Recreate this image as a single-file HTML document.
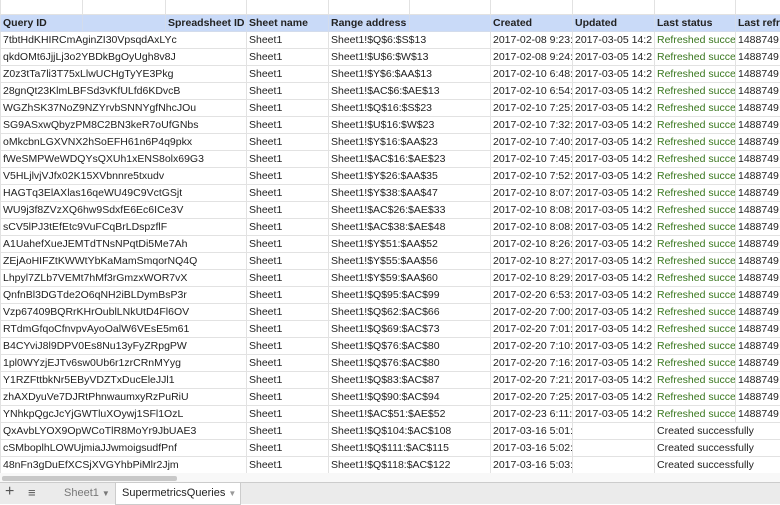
<!DOCTYPE html><html><head><style>
body{margin:0;width:780px;height:504px;overflow:hidden;background:#fff;font-family:"Liberation Sans",Arial,sans-serif;font-size:10.5px;color:#222;position:relative}
table{border-collapse:collapse;table-layout:fixed;position:absolute;top:-1px;left:0;width:816px}
td{border:1px solid #e2e2e2;height:16px;padding:0 2px;white-space:nowrap;overflow:hidden;line-height:16px}
tr.h td{background:#c9daf8;font-weight:bold;border-color:#d3dcec}
tr.t td{height:14px}
.g{color:#38761d}
.r{text-align:right}
#sb{position:absolute;top:473px;left:0;width:780px;height:9px;background:#f8f8f8;border-bottom:1px solid #ccc}
#th{position:absolute;top:476px;left:2px;width:175px;height:5px;background:#c8c8c8;border-radius:2px}
#tabs{position:absolute;top:483px;left:0;width:780px;height:21px;background:#ebebeb;color:#555;font-size:11px}
#tabs span{position:absolute;top:4px}
#act{position:absolute;left:115px;top:0;width:124px;height:21px;background:#fff;border:1px solid #ccc;border-top:none}
</style></head><body>
<table>
<colgroup><col style="width:82px"><col style="width:83px"><col style="width:81px"><col style="width:82px"><col style="width:81px"><col style="width:81px"><col style="width:82px"><col style="width:82px"><col style="width:81px"><col style="width:81px"></colgroup>
<tr class="t"><td></td><td></td><td></td><td></td><td></td><td></td><td></td><td></td><td></td><td></td></tr>
<tr class="h"><td>Query ID</td><td></td><td class="r">Spreadsheet ID</td><td>Sheet name</td><td>Range address</td><td></td><td>Created</td><td>Updated</td><td>Last status</td><td>Last refr</td></tr>
<tr><td colspan=3>7tbtHdKHIRCmAginZI30VpsqdAxLYc</td><td>Sheet1</td><td colspan=2>Sheet1!$Q$6:$S$13</td><td>2017-02-08 9:23:</td><td>2017-03-05 14:2</td><td class="g">Refreshed succe</td><td>1488749</td></tr>
<tr><td colspan=3>qkdOMt6JjjLj3o2YBDkBgOyUgh8v8J</td><td>Sheet1</td><td colspan=2>Sheet1!$U$6:$W$13</td><td>2017-02-08 9:24:</td><td>2017-03-05 14:2</td><td class="g">Refreshed succe</td><td>1488749</td></tr>
<tr><td colspan=3>Z0z3tTa7li3T75xLlwUCHgTyYE3Pkg</td><td>Sheet1</td><td colspan=2>Sheet1!$Y$6:$AA$13</td><td>2017-02-10 6:48:</td><td>2017-03-05 14:2</td><td class="g">Refreshed succe</td><td>1488749</td></tr>
<tr><td colspan=3>28gnQt23KlmLBFSd3vKfULfd6KDvcB</td><td>Sheet1</td><td colspan=2>Sheet1!$AC$6:$AE$13</td><td>2017-02-10 6:54:</td><td>2017-03-05 14:2</td><td class="g">Refreshed succe</td><td>1488749</td></tr>
<tr><td colspan=3>WGZhSK37NoZ9NZYrvbSNNYgfNhcJOu</td><td>Sheet1</td><td colspan=2>Sheet1!$Q$16:$S$23</td><td>2017-02-10 7:25:</td><td>2017-03-05 14:2</td><td class="g">Refreshed succe</td><td>1488749</td></tr>
<tr><td colspan=3>SG9ASxwQbyzPM8C2BN3keR7oUfGNbs</td><td>Sheet1</td><td colspan=2>Sheet1!$U$16:$W$23</td><td>2017-02-10 7:32:</td><td>2017-03-05 14:2</td><td class="g">Refreshed succe</td><td>1488749</td></tr>
<tr><td colspan=3>oMkcbnLGXVNX2hSoEFH61n6P4q9pkx</td><td>Sheet1</td><td colspan=2>Sheet1!$Y$16:$AA$23</td><td>2017-02-10 7:40:</td><td>2017-03-05 14:2</td><td class="g">Refreshed succe</td><td>1488749</td></tr>
<tr><td colspan=3>fWeSMPWeWDQYsQXUh1xENS8olx69G3</td><td>Sheet1</td><td colspan=2>Sheet1!$AC$16:$AE$23</td><td>2017-02-10 7:45:</td><td>2017-03-05 14:2</td><td class="g">Refreshed succe</td><td>1488749</td></tr>
<tr><td colspan=3>V5HLjlvjVJfx02K15XVbnnre5txudv</td><td>Sheet1</td><td colspan=2>Sheet1!$Y$26:$AA$35</td><td>2017-02-10 7:52:</td><td>2017-03-05 14:2</td><td class="g">Refreshed succe</td><td>1488749</td></tr>
<tr><td colspan=3>HAGTq3ElAXlas16qeWU49C9VctGSjt</td><td>Sheet1</td><td colspan=2>Sheet1!$Y$38:$AA$47</td><td>2017-02-10 8:07:</td><td>2017-03-05 14:2</td><td class="g">Refreshed succe</td><td>1488749</td></tr>
<tr><td colspan=3>WU9j3f8ZVzXQ6hw9SdxfE6Ec6ICe3V</td><td>Sheet1</td><td colspan=2>Sheet1!$AC$26:$AE$33</td><td>2017-02-10 8:08:</td><td>2017-03-05 14:2</td><td class="g">Refreshed succe</td><td>1488749</td></tr>
<tr><td colspan=3>sCV5lPJ3tEfEtc9VuFCqBrLDspzflF</td><td>Sheet1</td><td colspan=2>Sheet1!$AC$38:$AE$48</td><td>2017-02-10 8:08:</td><td>2017-03-05 14:2</td><td class="g">Refreshed succe</td><td>1488749</td></tr>
<tr><td colspan=3>A1UahefXueJEMTdTNsNPqtDi5Me7Ah</td><td>Sheet1</td><td colspan=2>Sheet1!$Y$51:$AA$52</td><td>2017-02-10 8:26:</td><td>2017-03-05 14:2</td><td class="g">Refreshed succe</td><td>1488749</td></tr>
<tr><td colspan=3>ZEjAoHIFZtKWWtYbKaMamSmqorNQ4Q</td><td>Sheet1</td><td colspan=2>Sheet1!$Y$55:$AA$56</td><td>2017-02-10 8:27:</td><td>2017-03-05 14:2</td><td class="g">Refreshed succe</td><td>1488749</td></tr>
<tr><td colspan=3>Lhpyl7ZLb7VEMt7hMf3rGmzxWOR7vX</td><td>Sheet1</td><td colspan=2>Sheet1!$Y$59:$AA$60</td><td>2017-02-10 8:29:</td><td>2017-03-05 14:2</td><td class="g">Refreshed succe</td><td>1488749</td></tr>
<tr><td colspan=3>QnfnBl3DGTde2O6qNH2iBLDymBsP3r</td><td>Sheet1</td><td colspan=2>Sheet1!$Q$95:$AC$99</td><td>2017-02-20 6:53:</td><td>2017-03-05 14:2</td><td class="g">Refreshed succe</td><td>1488749</td></tr>
<tr><td colspan=3>Vzp67409BQRrKHrOublLNkUtD4Fl6OV</td><td>Sheet1</td><td colspan=2>Sheet1!$Q$62:$AC$66</td><td>2017-02-20 7:00:</td><td>2017-03-05 14:2</td><td class="g">Refreshed succe</td><td>1488749</td></tr>
<tr><td colspan=3>RTdmGfqoCfnvpvAyoOalW6VEsE5m61</td><td>Sheet1</td><td colspan=2>Sheet1!$Q$69:$AC$73</td><td>2017-02-20 7:01:</td><td>2017-03-05 14:2</td><td class="g">Refreshed succe</td><td>1488749</td></tr>
<tr><td colspan=3>B4CYviJ8l9DPV0Es8Nu13yFyZRpgPW</td><td>Sheet1</td><td colspan=2>Sheet1!$Q$76:$AC$80</td><td>2017-02-20 7:10:</td><td>2017-03-05 14:2</td><td class="g">Refreshed succe</td><td>1488749</td></tr>
<tr><td colspan=3>1pl0WYzjEJTv6sw0Ub6r1zrCRnMYyg</td><td>Sheet1</td><td colspan=2>Sheet1!$Q$76:$AC$80</td><td>2017-02-20 7:16:</td><td>2017-03-05 14:2</td><td class="g">Refreshed succe</td><td>1488749</td></tr>
<tr><td colspan=3>Y1RZFttbkNr5EByVDZTxDucEleJJl1</td><td>Sheet1</td><td colspan=2>Sheet1!$Q$83:$AC$87</td><td>2017-02-20 7:21:</td><td>2017-03-05 14:2</td><td class="g">Refreshed succe</td><td>1488749</td></tr>
<tr><td colspan=3>zhAXDyuVe7DJRtPhnwaumxyRzPuRiU</td><td>Sheet1</td><td colspan=2>Sheet1!$Q$90:$AC$94</td><td>2017-02-20 7:25:</td><td>2017-03-05 14:2</td><td class="g">Refreshed succe</td><td>1488749</td></tr>
<tr><td colspan=3>YNhkpQgcJcYjGWTluXOywj1SFl1OzL</td><td>Sheet1</td><td colspan=2>Sheet1!$AC$51:$AE$52</td><td>2017-02-23 6:11:</td><td>2017-03-05 14:2</td><td class="g">Refreshed succe</td><td>1488749</td></tr>
<tr><td colspan=3>QxAvbLYOX9OpWCoTlR8MoYr9JbUAE3</td><td>Sheet1</td><td colspan=2>Sheet1!$Q$104:$AC$108</td><td>2017-03-16 5:01:</td><td></td><td colspan=2>Created successfully</td></tr>
<tr><td colspan=3>cSMboplhLOWUjmiaJJwmoigsudfPnf</td><td>Sheet1</td><td colspan=2>Sheet1!$Q$111:$AC$115</td><td>2017-03-16 5:02:</td><td></td><td colspan=2>Created successfully</td></tr>
<tr><td colspan=3>48nFn3gDuEfXCSjXVGYhbPiMlr2Jjm</td><td>Sheet1</td><td colspan=2>Sheet1!$Q$118:$AC$122</td><td>2017-03-16 5:03:</td><td></td><td colspan=2>Created successfully</td></tr>
</table>
<div id="sb"></div><div id="th"></div>
<div id="tabs">
<span style="left:5px;font-size:16px;top:0">+</span>
<span style="left:28px;font-size:13px;top:2px">≡</span>
<span style="left:64px;color:#777">Sheet1 <span style="position:static;font-size:8px">▼</span></span>
<div id="act"></div>
<span style="left:122px;color:#222">SupermetricsQueries <span style="position:static;font-size:8px;color:#999">▼</span></span>
</div>
</body></html>
